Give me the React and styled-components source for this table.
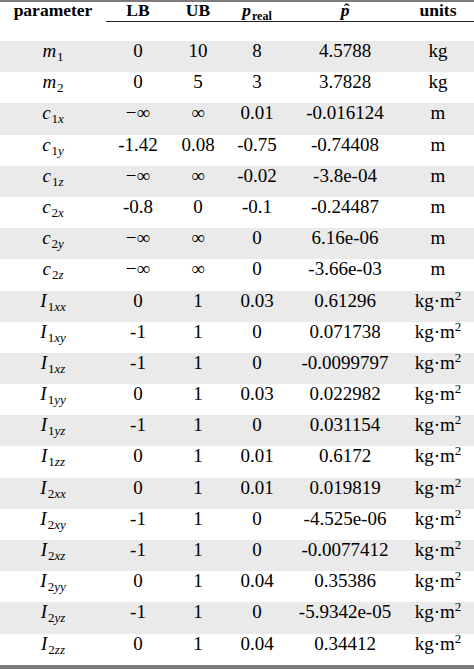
import React from "react";
import styled, { createGlobalStyle } from "styled-components";

const GlobalStyle = createGlobalStyle`
  html, body {
    margin: 0;
    padding: 0;
    background: #ffffff;
  }
  body {
    font-family: "Liberation Serif", "Times New Roman", serif;
    color: #000000;
  }
`;

const COLS = "106px 64px 56px 62px 114px 72px";

const Page = styled.div`
  width: 474px;
  display: flex;
  flex-direction: column;
`;

const Rule = styled.div`
  height: ${(p) => p.thick}px;
  background: ${(p) => p.color || "#7b7b7b"};
  margin-left: ${(p) => p.indent || 0}px;
`;

const HeaderRow = styled.div`
  display: grid;
  grid-template-columns: ${COLS};
  height: 19px;
  font-weight: bold;
  font-size: 17.5px;
  line-height: 16px;
`;

const HeaderCell = styled.div`
  text-align: center;
  white-space: nowrap;
`;

const Gap = styled.div`
  height: 19px;
`;

const Row = styled.div`
  display: grid;
  grid-template-columns: ${COLS};
  height: 31.2px;
  background: ${(p) => (p.shaded ? "#eaeaea" : "#ffffff")};
  font-size: 19px;
  line-height: 19px;
`;

const Cell = styled.div`
  text-align: center;
  white-space: nowrap;
`;

const Sym = styled.span`
  font-style: italic;
`;

const Sub = styled.span`
  font-size: ${(p) => p.size || 13}px;
  vertical-align: ${(p) => p.drop || -4}px;
  line-height: 0;
  margin-left: 1px;
`;

const Sup = styled.span`
  font-size: 13px;
  vertical-align: 7px;
  line-height: 0;
`;

const Hat = styled.span`
  position: relative;
  display: inline-block;
  font-style: italic;
  &::after {
    content: "ˆ";
    position: absolute;
    left: 3px;
    top: -1px;
    line-height: 16px;
    font-style: normal;
  }
`;

const rows = [
  ["m", "1", "", "0", "10", "8", "4.5788", "kg"],
  ["m", "2", "", "0", "5", "3", "3.7828", "kg"],
  ["c", "1", "x", "−∞", "∞", "0.01", "-0.016124", "m"],
  ["c", "1", "y", "-1.42", "0.08", "-0.75", "-0.74408", "m"],
  ["c", "1", "z", "−∞", "∞", "-0.02", "-3.8e-04", "m"],
  ["c", "2", "x", "-0.8", "0", "-0.1", "-0.24487", "m"],
  ["c", "2", "y", "−∞", "∞", "0", "6.16e-06", "m"],
  ["c", "2", "z", "−∞", "∞", "0", "-3.66e-03", "m"],
  ["I", "1", "xx", "0", "1", "0.03", "0.61296", "kgm2"],
  ["I", "1", "xy", "-1", "1", "0", "0.071738", "kgm2"],
  ["I", "1", "xz", "-1", "1", "0", "-0.0099797", "kgm2"],
  ["I", "1", "yy", "0", "1", "0.03", "0.022982", "kgm2"],
  ["I", "1", "yz", "-1", "1", "0", "0.031154", "kgm2"],
  ["I", "1", "zz", "0", "1", "0.01", "0.6172", "kgm2"],
  ["I", "2", "xx", "0", "1", "0.01", "0.019819", "kgm2"],
  ["I", "2", "xy", "-1", "1", "0", "-4.525e-06", "kgm2"],
  ["I", "2", "xz", "-1", "1", "0", "-0.0077412", "kgm2"],
  ["I", "2", "yy", "0", "1", "0.04", "0.35386", "kgm2"],
  ["I", "2", "yz", "-1", "1", "0", "-5.9342e-05", "kgm2"],
  ["I", "2", "zz", "0", "1", "0.04", "0.34412", "kgm2"],
];

const Unit = ({ u }) =>
  u === "kgm2" ? (
    <span>
      kg·m<Sup>2</Sup>
    </span>
  ) : (
    <span>{u}</span>
  );

export default function App() {
  return (
    <Page>
      <GlobalStyle />
      <Rule thick={2} />
      <HeaderRow>
        <HeaderCell>parameter</HeaderCell>
        <HeaderCell>LB</HeaderCell>
        <HeaderCell>UB</HeaderCell>
        <HeaderCell>
          <Sym>p</Sym>
          <Sub size={12} drop={-4}>real</Sub>
        </HeaderCell>
        <HeaderCell>
          <Hat>p</Hat>
        </HeaderCell>
        <HeaderCell>units</HeaderCell>
      </HeaderRow>
      <Rule thick={1} color="#222222" indent={106} />
      <Gap />
      {rows.map(([sym, num, axis, lb, ub, real, est, unit], i) => (
        <Row key={sym + num + axis} shaded={i % 2 === 0}>
          <Cell>
            <Sym>{sym}</Sym>
            <Sub>
              {num}
              <Sym>{axis}</Sym>
            </Sub>
          </Cell>
          <Cell>{lb}</Cell>
          <Cell>{ub}</Cell>
          <Cell>{real}</Cell>
          <Cell>{est}</Cell>
          <Cell>
            <Unit u={unit} />
          </Cell>
        </Row>
      ))}
      <Rule thick={4} />
    </Page>
  );
}
